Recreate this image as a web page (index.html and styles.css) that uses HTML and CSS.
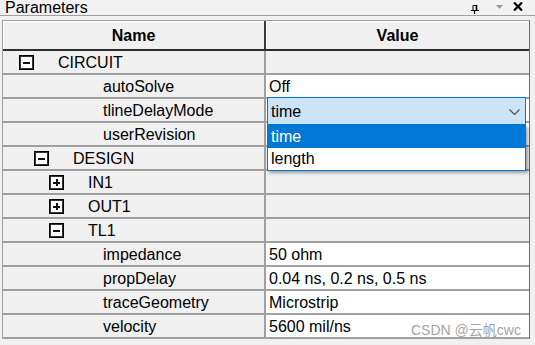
FILE: index.html
```html
<!DOCTYPE html>
<html>
<head>
<meta charset="utf-8">
<link rel="stylesheet" href="styles.css">
</head>
<body>
<div class="titlebar">
  <span class="title">Parameters</span>
  <div class="title-icons">
    <svg class="ic-pin" width="8" height="9" viewBox="0 0 8 9"><path d="M2 0.5H5.5V5M2 0.5V5" fill="none" stroke="#000" stroke-width="1"/><path d="M5.5 0V5.5" stroke="#000" stroke-width="1.6"/><path d="M0 5.5H8" stroke="#000" stroke-width="1"/><path d="M3.5 5.5V9" stroke="#000" stroke-width="1.2"/></svg>
    <svg class="ic-arrow" width="7" height="4" viewBox="0 0 7 4"><path d="M0 0H7L3.5 4Z" fill="#9a9a9a"/></svg>
    <svg class="ic-close" width="10" height="9" viewBox="0 0 10 9"><path d="M1 0.5L9 8.5M9 0.5L1 8.5" stroke="#000" stroke-width="2.2"/></svg>
  </div>
</div>
<div class="grid">
  <div class="row header">
    <div class="cell name hcell">Name</div>
    <div class="cell value hcell">Value</div>
  </div>
  <div class="row group">
    <div class="cell name lvl0"><span class="exp minus"></span>CIRCUIT</div>
    <div class="cell value"></div>
  </div>
  <div class="row">
    <div class="cell name leaf">autoSolve</div>
    <div class="cell value">Off</div>
  </div>
  <div class="row">
    <div class="cell name leaf">tlineDelayMode</div>
    <div class="cell value"></div>
  </div>
  <div class="row">
    <div class="cell name leaf">userRevision</div>
    <div class="cell value"></div>
  </div>
  <div class="row group">
    <div class="cell name lvl1"><span class="exp minus"></span>DESIGN</div>
    <div class="cell value"></div>
  </div>
  <div class="row group">
    <div class="cell name lvl2"><span class="exp plus"></span>IN1</div>
    <div class="cell value"></div>
  </div>
  <div class="row group">
    <div class="cell name lvl2"><span class="exp plus"></span>OUT1</div>
    <div class="cell value"></div>
  </div>
  <div class="row group">
    <div class="cell name lvl2"><span class="exp minus"></span>TL1</div>
    <div class="cell value"></div>
  </div>
  <div class="row">
    <div class="cell name leaf">impedance</div>
    <div class="cell value">50 ohm</div>
  </div>
  <div class="row">
    <div class="cell name leaf">propDelay</div>
    <div class="cell value">0.04 ns, 0.2 ns, 0.5 ns</div>
  </div>
  <div class="row">
    <div class="cell name leaf">traceGeometry</div>
    <div class="cell value">Microstrip</div>
  </div>
  <div class="row">
    <div class="cell name leaf">velocity</div>
    <div class="cell value">5600 mil/ns</div>
  </div>
</div>

<div class="combo">
  <span>time</span>
  <svg width="11" height="6" viewBox="0 0 11 6"><path d="M0.5 0.5L5.5 5.5L10.5 0.5" fill="none" stroke="#555" stroke-width="1.3"/></svg>
</div>
<div class="list">
  <div class="item sel">time</div>
  <div class="item">length</div>
</div>

<div class="watermark">CSDN @云帆cwc</div>
</body>
</html>
```

FILE: styles.css
```css
html, body {
  margin: 0;
  padding: 0;
}
body {
  width: 535px;
  height: 345px;
  overflow: hidden;
  position: relative;
  background: #f0f0f0;
  font-family: "Liberation Sans", Arial, sans-serif;
  font-size: 16px;
  color: #000;
}

.titlebar {
  height: 15px;
  border-bottom: 1px solid #a0a0a0;
  background: #f2f2f2;
  display: flex;
  justify-content: space-between;
  align-items: flex-start;
  padding-left: 5px;
}
.title {
  display: block;
  line-height: 15px;
  margin-top: 0;
}
.title-icons {
  display: flex;
  align-items: flex-start;
  margin-right: 12px;
}
.ic-pin {
  margin-top: 5px;
}
.ic-arrow {
  margin-top: 5px;
  margin-left: 17px;
}
.ic-close {
  margin-top: 2px;
  margin-left: 10px;
}

.grid {
  margin: 4px 0 0 2px;
  width: 528px;
  box-sizing: border-box;
  border-left: 1px solid #a0a0a0;
  border-top: 1px solid #a0a0a0;
  border-right: 1px solid #6a6a6a;
}
.row {
  display: flex;
  height: 24px;
  box-sizing: border-box;
  border-bottom: 2px solid #a0a0a0;
}
.cell {
  box-sizing: border-box;
  display: flex;
  align-items: center;
  white-space: nowrap;
  padding-top: 1px;
}
.cell.name {
  width: 263px;
  border-right: 2px solid #a0a0a0;
  background: #f0f0f0;
}
.cell.value {
  flex: 1;
  padding-left: 3px;
  background: #fff;
}
.group .cell.value {
  background: #f0f0f0;
}

.row.header {
  height: 30px;
  border-bottom: 2px solid #2e2e2e;
}
.hcell {
  justify-content: center;
  font-weight: bold;
  padding-left: 0;
}
.cell.name.hcell {
  background: #f0f0f0;
  border-right: 2px solid #3a3a3a;
  box-shadow: inset 1px 1px 0 #fff;
}
.cell.value.hcell {
  background: #f0f0f0;
  padding-left: 0;
  box-shadow: inset 1px 1px 0 #fff;
}

.leaf {
  padding-left: 100px;
}
.lvl0 {
  padding-left: 16px;
}
.lvl1 {
  padding-left: 31px;
}
.lvl2 {
  padding-left: 46px;
}

.exp {
  width: 15px;
  height: 15px;
  box-sizing: border-box;
  border: 1px solid #000;
  box-shadow: inset 0 0 0 1px #333;
  background: #fff;
  margin-right: 24px;
  position: relative;
  flex: none;
}
.exp::after {
  content: "";
  position: absolute;
  left: 3px;
  right: 3px;
  top: 5.5px;
  height: 2px;
  background: #111;
}
.exp.plus::before {
  content: "";
  position: absolute;
  top: 3px;
  bottom: 3px;
  left: 5.5px;
  width: 2px;
  background: #111;
}

.combo {
  position: absolute;
  left: 267px;
  top: 97px;
  width: 259px;
  height: 28px;
  box-sizing: border-box;
  border: 1px solid #0078d7;
  background: #cce4f7;
  display: flex;
  align-items: center;
  justify-content: space-between;
  padding: 1px 5px 0 3px;
}
.list {
  position: absolute;
  left: 267px;
  top: 125px;
  width: 259px;
  box-sizing: border-box;
  border: 1px solid #0078d7;
  background: #fff;
  box-shadow: 2px 2px 3px rgba(0, 0, 0, 0.35);
}
.item {
  height: 22px;
  line-height: 22px;
  padding-left: 3px;
}
.item.sel {
  background: #0078d7;
  color: #fff;
}

.watermark {
  position: absolute;
  left: 411px;
  top: 319px;
  font-size: 14px;
  color: #a4a4a4;
  font-family: "Liberation Sans", "Noto Sans CJK SC", sans-serif;
}
```
